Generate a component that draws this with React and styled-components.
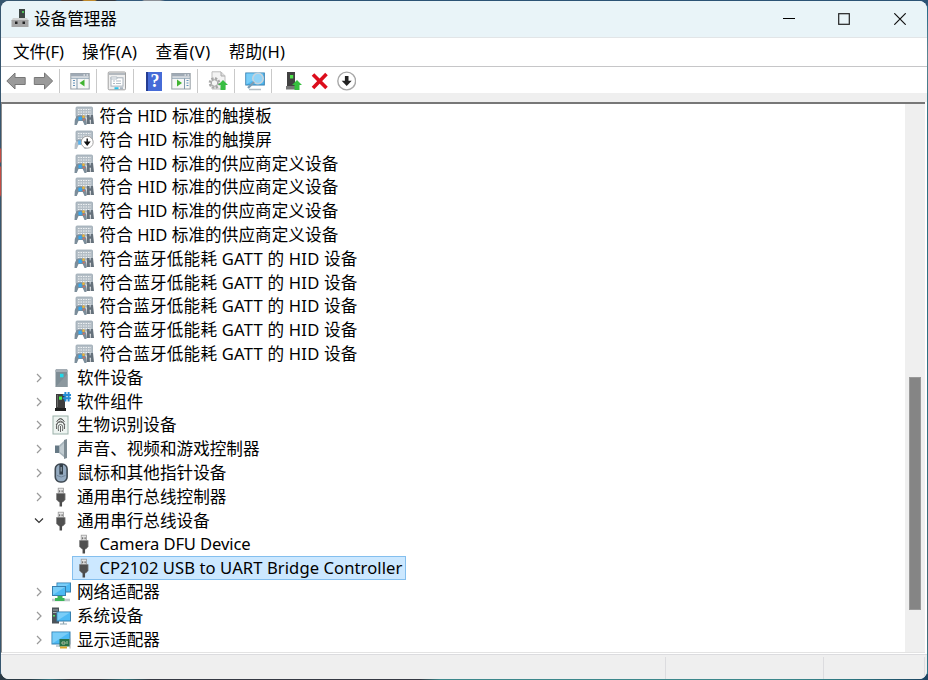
import React from "react";
import styled, { createGlobalStyle } from "styled-components";

const GlobalStyle = createGlobalStyle`
  * { box-sizing: border-box; }
  html, body { margin: 0; height: 100%; overflow: hidden; }
  body { font-family: "Noto Sans", "Noto Sans CJK SC", sans-serif; color: #000; }
`;

const Desktop = styled.div`
  width: 928px;
  height: 680px;
  padding: 1px;
  background:
    linear-gradient(90deg, #36566f 0 60px, #4c3c34 62px 82px, #c08a2c 84px 95px, #33383f 97px 115px, #345a7b 117px 142px, #8c9097 144px 160px, #2b5375 165px) 0 0 / 100% 6px no-repeat,
    linear-gradient(90deg, #2c3a44 0 30px, #33737e 50px, #34373f 70px 100px, #2f7077 125px, #353943 150px 420px, #3c878b 440px 780px, #2d7680 850px, #1d4361) 0 100% / 100% 6px no-repeat,
    linear-gradient(180deg, #37566f 0 148px, #c34b43 149px 162px, #37566f 163px 166px, #c34b43 167px 195px, #37566f 197px) 0 0 / 6px 100% no-repeat,
    linear-gradient(180deg, #1d6587, #5c8793 56px, #2f7183 120px 400px, #476a75 620px, #24788e);
`;

const Window = styled.main`
  display: flex;
  flex-direction: column;
  width: 926px;
  height: 678px;
  overflow: hidden;
  border-radius: 8px;
  background: #fff;
`;

const TitleBar = styled.header`
  display: flex;
  align-items: center;
  flex: 0 0 37px;
  padding-left: 9px;
  background: #e9f4f8;
  border-bottom: 1px solid #e2e5e7;
`;

const Title = styled.h1`
  flex: 1;
  margin: 0 0 0 4px;
  font-size: 16.6px;
  font-weight: 400;
  line-height: 24px;
`;

const WindowControl = styled.button`
  display: flex;
  align-items: center;
  justify-content: center;
  width: 55.5px;
  height: 36px;
  padding: 0 0 0 1px;
  border: 0;
  background: none;
`;

const MenuBar = styled.nav`
  display: flex;
  align-items: center;
  gap: 18.3px;
  flex: 0 0 29px;
  padding-left: 12px;
  background: #fff;
  border-bottom: 1px solid #c6c6c8;
`;

const MenuItem = styled.span`
  font-size: 16.6px;
  line-height: 24px;
  letter-spacing: ${(p) => p.$tracking};
  white-space: nowrap;
`;

const Toolbar = styled.div`
  display: flex;
  align-items: center;
  flex: 0 0 35px;
  padding-left: 1.5px;
  background: #fff;
  border-bottom: 9px solid #efefef;
`;

const ToolButton = styled.button`
  display: flex;
  align-items: center;
  justify-content: center;
  width: 27px;
  height: 26px;
  padding: 2px 0 0;
  border: 0;
  background: none;
`;

const Separator = styled.span`
  width: 1px;
  height: 24px;
  margin: 2px 7px 0 2px;
  background: #c9c9c9;
`;

const TreeFrame = styled.section`
  display: flex;
  flex: 0 0 548px;
  margin-right: 2px;
  border-top: 2px solid #777;
  border-left: 1px solid #8c8c8c;
  border-bottom: 1px solid #e3e3e3;
  background: #fff;
`;

const Tree = styled.ul`
  flex: 1;
  margin: 0;
  padding: 0.2px 0 0;
  list-style: none;
  overflow: hidden;
`;

const Row = styled.li`
  display: flex;
  align-items: center;
  height: 23.8px;
  padding-left: ${(p) => (p.$child ? "70px" : "31px")};
`;

const Chevron = styled.svg`
  width: 12px;
  height: 12px;
  margin: 0 5px 0 -1px;
  flex: none;
  fill: none;
  stroke: ${(p) => (p.$open ? "#333" : "#999")};
  stroke-width: 1.2;
`;

const Label = styled.span`
  display: flex;
  align-items: center;
  gap: ${(p) => (p.$child ? "5.5px" : "6px")};
  height: 23.8px;
  padding: 0 3px 0 1px;
  border: 1px solid ${(p) => (p.$selected ? "#84bfee" : "transparent")};
  background: ${(p) => (p.$selected ? "#cce8ff" : "transparent")};
  font-size: 16.6px;
  line-height: 22px;
  letter-spacing: ${(p) => p.$tracking || "0"};
  white-space: pre;
`;

const Icon = styled.svg`
  width: 20px;
  height: 20px;
  flex: none;
`;

const ScrollTrack = styled.div`
  width: 20px;
  padding: 273px 4px 0 4px;
  background: #efefef;
`;

const ScrollThumb = styled.div`
  height: 233px;
  background: #858585;
  border: 1px solid #999;
`;

const StatusBar = styled.footer`
  display: flex;
  flex: 1;
  margin-top: 1px;
  padding-top: 2px;
  border-top: 1px solid #dcdcdf;
  background: #efefef;
`;

const StatusCell = styled.div`
  width: ${(p) => p.$width};
  border-right: 1px solid #dcdcdf;
`;

function KeyboardArt() {
  return (
    <>
      <rect x="2" y="1" width="16.5" height="10" rx="1" fill="#b4bec6" stroke="#9ba8b2" strokeWidth=".8" />
      <path d="M4 3.5h13M4 6h13M4 8.5h13" stroke="#edf1f3" strokeWidth="1.2" strokeDasharray="1.5 1" />
    </>
  );
}

function PadArt() {
  return <path d="M2.5 10q4-1.5 8 0l1.5 3 .5 6h-2L8.7 15H4.5L2.8 19H.5l.3-5z" fill="#7b8d9a" />;
}

function PlugShape() {
  return (
    <>
      <rect x="7.2" y="1.2" width="5.2" height="5.8" fill="#e5e5e5" stroke="#999" strokeWidth=".8" />
      <path d="M8.7 3.3v2M11.1 3.3v2" stroke="#555" />
      <path d="M5.5 6.5h8.6v6.2L12 15H8l-2.5-2.3z" fill="#505050" stroke="#858585" strokeWidth=".7" />
      <path d="M9.8 14v5.5" stroke="#4b4b4b" strokeWidth="2.5" />
    </>
  );
}

function Monitor({ x, y, w, h }) {
  return (
    <>
      <rect x={x} y={y} width={w} height={h} fill="#4dbaf4" stroke="#377fae" strokeWidth="1" />
      <path d={`M${x + 0.5} ${y + h - 0.5}V${y + 0.5}H${x + w - 0.5}z`} fill="#79cdf8" />
    </>
  );
}

const drawings = {
  hid: (
    <>
      <KeyboardArt />
      <PadArt />
      <path d="M13 9h2.4l.6 9h-3.6zM17 9h2l1 9h-3.4z" fill="#65717b" />
      <path d="M13.5 12.5h5" stroke="#65717b" strokeWidth="2.5" />
      <rect x="4.5" y="10.7" width="3.2" height="3.5" fill="#36a8f0" />
      <rect x="8.4" y="9.5" width="2.2" height="2.4" fill="#f1b736" />
      <circle cx="9.8" cy="13.6" r=".9" fill="#df6a58" />
    </>
  ),
  touch: (
    <>
      <KeyboardArt />
      <g opacity=".55"><PadArt /></g>
      <rect x="4.2" y="10.5" width="3" height="4" fill="#59b4ef" />
      <circle cx="13.2" cy="12.2" r="6" fill="#fff" stroke="#a3a3a3" />
      <path d="M13.2 8.5v4M11.1 12.2h4.2l-2.1 2.7z" stroke="#111" strokeWidth="1.4" fill="#111" />
    </>
  ),
  software: (
    <>
      <path d="M4.5 2l1-1h10l1 1v17h-12z" fill="#7e8d95" />
      <path d="M4.5 2l1-1h10l1 1v2h-12z" fill="#a4adb4" />
      <path d="M4.5 19L16.5 6v13z" fill="#8c989e" />
      <rect x="9" y="5.8" width="3.5" height="3.5" fill="#21d9e8" />
    </>
  ),
  component: (
    <>
      <path d="M5 2h9v14H5z" fill="#3d3d3d" />
      <path d="M4 16h11v3H4z" fill="#202020" />
      <path d="M6 3h1v12H6z" fill="#696969" />
      <rect x="8" y="4.5" width="3" height="3.2" fill="#4cf34c" />
      <path d="M14.4 0v9.5M17.6 0v9.5M11.8 3h8.2M11.8 6.3h8.2" stroke="#248bd4" strokeWidth="2" fill="none" />
    </>
  ),
  biometric: (
    <>
      <rect x="2" y="1" width="15" height="18" fill="#eef4f1" stroke="#9bb2aa" />
      <path d="M5.5 7q4-7 8 0M5 10q4.5-8 9 0M5.5 14q-.8-7 4-7t4 7M7.5 16q-1.2-6.5 2-6.5t2 6.5M9.5 11v6M6.2 5.8q3.3-3.8 6.6 0" stroke="#555" fill="none" strokeWidth=".9" />
    </>
  ),
  speaker: (
    <>
      <path d="M4 6.5h4v7.5H4z" fill="#667985" />
      <path d="M8 6.5l6-5.5v18l-6-5z" fill="#a7b4bb" />
      <path d="M13 1l3-1v19l-3 1z" fill="#7f8c94" />
      <path d="M9 8l4-4v12l-4-3z" fill="#c2ccd1" />
    </>
  ),
  mouse: (
    <>
      <rect x="4.3" y="1" width="11.8" height="18" rx="5" fill="#94aac0" stroke="#3f4952" strokeWidth="1.6" />
      <path d="M6 12.5q4.2 3 8.4 0" stroke="#71859a" fill="none" />
      <path d="M10.2 1v10.5" stroke="#333f49" strokeWidth="3.6" />
      <path d="M10.2 4v4.5" stroke="#92a2ae" strokeWidth="1.2" />
    </>
  ),
  usb: <PlugShape />,
  network: (
    <>
      <Monitor x={6} y={1} w={13.5} h={9} />
      <Monitor x={1.5} y={4.5} w={13} h={9} />
      <path d="M1 18h18" stroke="#c0c9cc" strokeWidth="2.6" />
      <path d="M6.5 14h5v2h2v3H4v-3h2.5z" fill="#3eb65a" />
    </>
  ),
  system: (
    <>
      <path d="M1 1.5h7v16H1z" fill="#4b5359" />
      <path d="M2 4h5M2 6.5h5" stroke="#a4adb4" />
      <rect x="2" y="9" width="2" height="1.5" fill="#55e36a" />
      <Monitor x={6} y={6} w={13.5} h={9} />
      <path d="M12.5 15v3M9 18h7" stroke="#8ea5b1" strokeWidth="1.2" />
    </>
  ),
  display: (
    <>
      <Monitor x={1} y={2} w={18} h={12} />
      <path d="M5 16h5" stroke="#8ea5b1" />
      <rect x="8.5" y="9" width="10.5" height="7.5" fill="#28724a" />
      <path d="M11 12h3v2h-3zM16 11v3" stroke="#a9c9a0" fill="#183f2c" />
      <path d="M9 17.5h7" stroke="#d8a62b" strokeWidth="2" />
      <path d="M19 8.5v10" stroke="#a9a9a9" />
    </>
  ),
};

const toolDrawings = {
  back: <path d="M.8 10L9 2v4.5h10.2v7H9V18z" fill="#9a9a9a" stroke="#777" strokeWidth="1" />,
  forward: <path d="M19.7 10L11.5 2v4.5H1.3v7h10.2V18z" fill="#9a9a9a" stroke="#777" strokeWidth="1" />,
  consoleTree: <ConsolePane arrow="M14.5 8.5v7l-5-3.5z" divider={7} />,
  actionPane: <ConsolePane arrow="M6 8.5v7l5-3.5z" divider={13.5} />,
  properties: (
    <>
      <rect x="1.2" y="1" width="17.3" height="17.8" rx="1" fill="#efefef" stroke="#a0a0a0" />
      <path d="M2 3h16" stroke="#b3b9bf" strokeWidth="2" />
      <rect x="4" y="6.8" width="12" height="8.3" fill="#fff" stroke="#a8b2bc" />
      <path d="M4 6h6v2H4zM6 10h2M9 10h5M6 12.5h2M9 12.5h5" stroke="#b1bbc4" fill="#fff" />
      <path d="M7.5 17.2h4" stroke="#28bfe8" strokeWidth="2" /><path d="M13 17.2h3" stroke="#a7b5c0" strokeWidth="2" />
    </>
  ),
  scan: (
    <>
      <path d="M4 .8h9l4 4V18H4z" fill="#f3f3f3" stroke="#bdbdbd" /><path d="M13 1v4h4" fill="#ddd" stroke="#aaa" />
      <circle cx="6.5" cy="12" r="4.6" fill="#dedede" stroke="#a7a7a7" strokeWidth="2.5" strokeDasharray="2.2 1.4" />
      <circle cx="6.5" cy="12" r="3.2" fill="#f5f5f5" stroke="#a7a7a7" />
      <path d="M15 9l5 5h-2.5v5h-5v-5H10z" fill="#38bd42" />
    </>
  ),
  monitor: (
    <>
      <Monitor x={.8} y={2} w={18.5} h={12} />
      <path d="M4 18.5h12" stroke="#b5bec4" strokeWidth="1.6" />
      <circle cx="13" cy="7.5" r="5.2" fill="#91d3f7" stroke="#c5d3dc" strokeWidth="1.6" />
      <path d="M9 11l-6 6" stroke="#7c9db4" strokeWidth="2.3" />
    </>
  ),
  update: (
    <>
      <path d="M5 1h8v14H5z" fill="#414141" /><path d="M4 15h9v3.5H4z" fill="#777" />
      <rect x="8" y="4" width="3.2" height="3.5" fill="#50e44c" />
      <path d="M15 9l5 5h-2.5v5h-5v-5H10z" fill="#36bf3e" />
    </>
  ),
  remove: <path d="M4 3.5l13.5 13.5M17.5 3L4 17" stroke="#dc0d1c" strokeWidth="3.6" fill="none" />,
  disable: (
    <>
      <circle cx="10.7" cy="10" r="8.9" fill="#fff" stroke="#a8a8a8" strokeWidth="1.4" />
      <path d="M10.7 5v6" stroke="#222" strokeWidth="3.6" /><path d="M5.7 9.8h10l-5 5.2z" fill="#222" />
    </>
  ),
};

const HelpGlyph = styled.span`
  display: flex;
  align-items: center;
  justify-content: center;
  width: 16px;
  height: 19px;
  border-left: 2px solid #243c92;
  background: #466bd7;
  color: #fff;
  font: 700 18px/19px "Liberation Serif", serif;
`;

function ConsolePane({ arrow, divider }) {
  return (
    <>
      <rect x=".8" y="2.5" width="18.4" height="15.5" fill="#f7f7f7" stroke="#98a0a6" />
      <path d="M1 4h18" stroke="#9faab5" strokeWidth="3" /><path d="M13.5 4h1.5M16.5 4H18" stroke="#fff" />
      <path d={`M1 7.2h18M${divider} 7.5V18`} stroke="#8199ab" />
      <path d={divider < 10 ? "M3 9.5h2M3 12h2M3 14.5h2" : "M15.5 9.5h2M15.5 12h2M15.5 14.5h2"} stroke="#6292b8" />
      <path d={arrow} fill="#42b432" />
    </>
  );
}

function Drawing({ art }) {
  return <Icon viewBox="0 0 20 20" aria-hidden="true">{art}</Icon>;
}

const vendor = { icon: "hid", text: "符合 HID 标准的供应商定义设备", child: true, tracking: "0.06px" };
const gatt = { icon: "hid", text: "符合蓝牙低能耗 GATT 的 HID 设备", child: true, tracking: "0.22px" };

const devices = [
  { icon: "hid", text: "符合 HID 标准的触摸板", child: true, tracking: "0.08px" },
  { icon: "touch", text: "符合 HID 标准的触摸屏", child: true, tracking: "0.08px" },
  vendor, vendor, vendor, vendor,
  gatt, gatt, gatt, gatt, gatt,
  { icon: "software", text: "软件设备" },
  { icon: "component", text: "软件组件" },
  { icon: "biometric", text: "生物识别设备" },
  { icon: "speaker", text: "声音、视频和游戏控制器" },
  { icon: "mouse", text: "鼠标和其他指针设备" },
  { icon: "usb", text: "通用串行总线控制器" },
  { icon: "usb", text: "通用串行总线设备", open: true },
  { icon: "usb", text: "Camera DFU Device", child: true, tracking: "-0.13px" },
  { icon: "usb", text: "CP2102 USB to UART Bridge Controller", child: true, selected: true, tracking: "0.08px" },
  { icon: "network", text: "网络适配器" },
  { icon: "system", text: "系统设备" },
  { icon: "display", text: "显示适配器" },
];

const menus = [
  { text: "文件(F)", tracking: "-0.2px" },
  { text: "操作(A)", tracking: "0.3px" },
  { text: "查看(V)", tracking: "0.35px" },
  { text: "帮助(H)", tracking: "0.2px" },
];

const tools = ["back", "forward", null, "consoleTree", null, "properties", null, "help", "actionPane", null, "scan", null, "monitor", null, "update", "remove", "disable"];

function DeviceRow({ device }) {
  return (
    <Row $child={device.child}>
      {!device.child && (
        <Chevron viewBox="0 0 12 12" $open={device.open}>
          <path d={device.open ? "M3 3.5l4 4 4-4" : "M5 2l4 4-4 4"} />
        </Chevron>
      )}
      <Label $child={device.child} $selected={device.selected} $tracking={device.tracking}>
        <Drawing art={drawings[device.icon]} />
        {device.text}
      </Label>
    </Row>
  );
}

export default function App() {
  return (
    <>
      <GlobalStyle />
      <Desktop>
        <Window>
          <TitleBar>
            <Icon viewBox="0 0 20 20">
              <path d="M9 0h6v10H9z" fill="#3d4644" /><rect x="12" y="2" width="2" height="2" fill="#50bd59" />
              <path d="M3 9h14l2 3H1z" fill="#d0d2d2" />
              <path d="M1.5 11h17v7h-17z" fill="#a5a5a5" />
              <rect x="5" y="12.5" width="2.5" height="2.5" fill="#222" /><rect x="12.5" y="12.5" width="2.5" height="2.5" fill="#222" />
            </Icon>
            <Title>设备管理器</Title>
            <WindowControl aria-label="最小化"><svg width="12" height="12"><path d="M0 5.5h12" stroke="#000" /></svg></WindowControl>
            <WindowControl aria-label="最大化"><svg width="12" height="12"><rect x=".7" y=".7" width="10.6" height="10.6" fill="none" stroke="#222" strokeWidth="1.2" /></svg></WindowControl>
            <WindowControl aria-label="关闭"><svg width="12" height="12"><path d="M.3.3l11.4 11.4M11.7.3L.3 11.7" stroke="#111" strokeWidth="1.2" /></svg></WindowControl>
          </TitleBar>
          <MenuBar>
            {menus.map((menu) => <MenuItem key={menu.text} $tracking={menu.tracking}>{menu.text}</MenuItem>)}
          </MenuBar>
          <Toolbar>
            {tools.map((tool, i) => tool === null ? <Separator key={i} /> : (
              <ToolButton key={i}>{tool === "help" ? <HelpGlyph>?</HelpGlyph> : <Drawing art={toolDrawings[tool]} />}</ToolButton>
            ))}
          </Toolbar>
          <TreeFrame>
            <Tree>{devices.map((device, i) => <DeviceRow key={i} device={device} />)}</Tree>
            <ScrollTrack><ScrollThumb /></ScrollTrack>
          </TreeFrame>
          <StatusBar>
            <StatusCell $width="665px" /><StatusCell $width="158px" /><StatusCell $width="101px" />
          </StatusBar>
        </Window>
      </Desktop>
    </>
  );
}
